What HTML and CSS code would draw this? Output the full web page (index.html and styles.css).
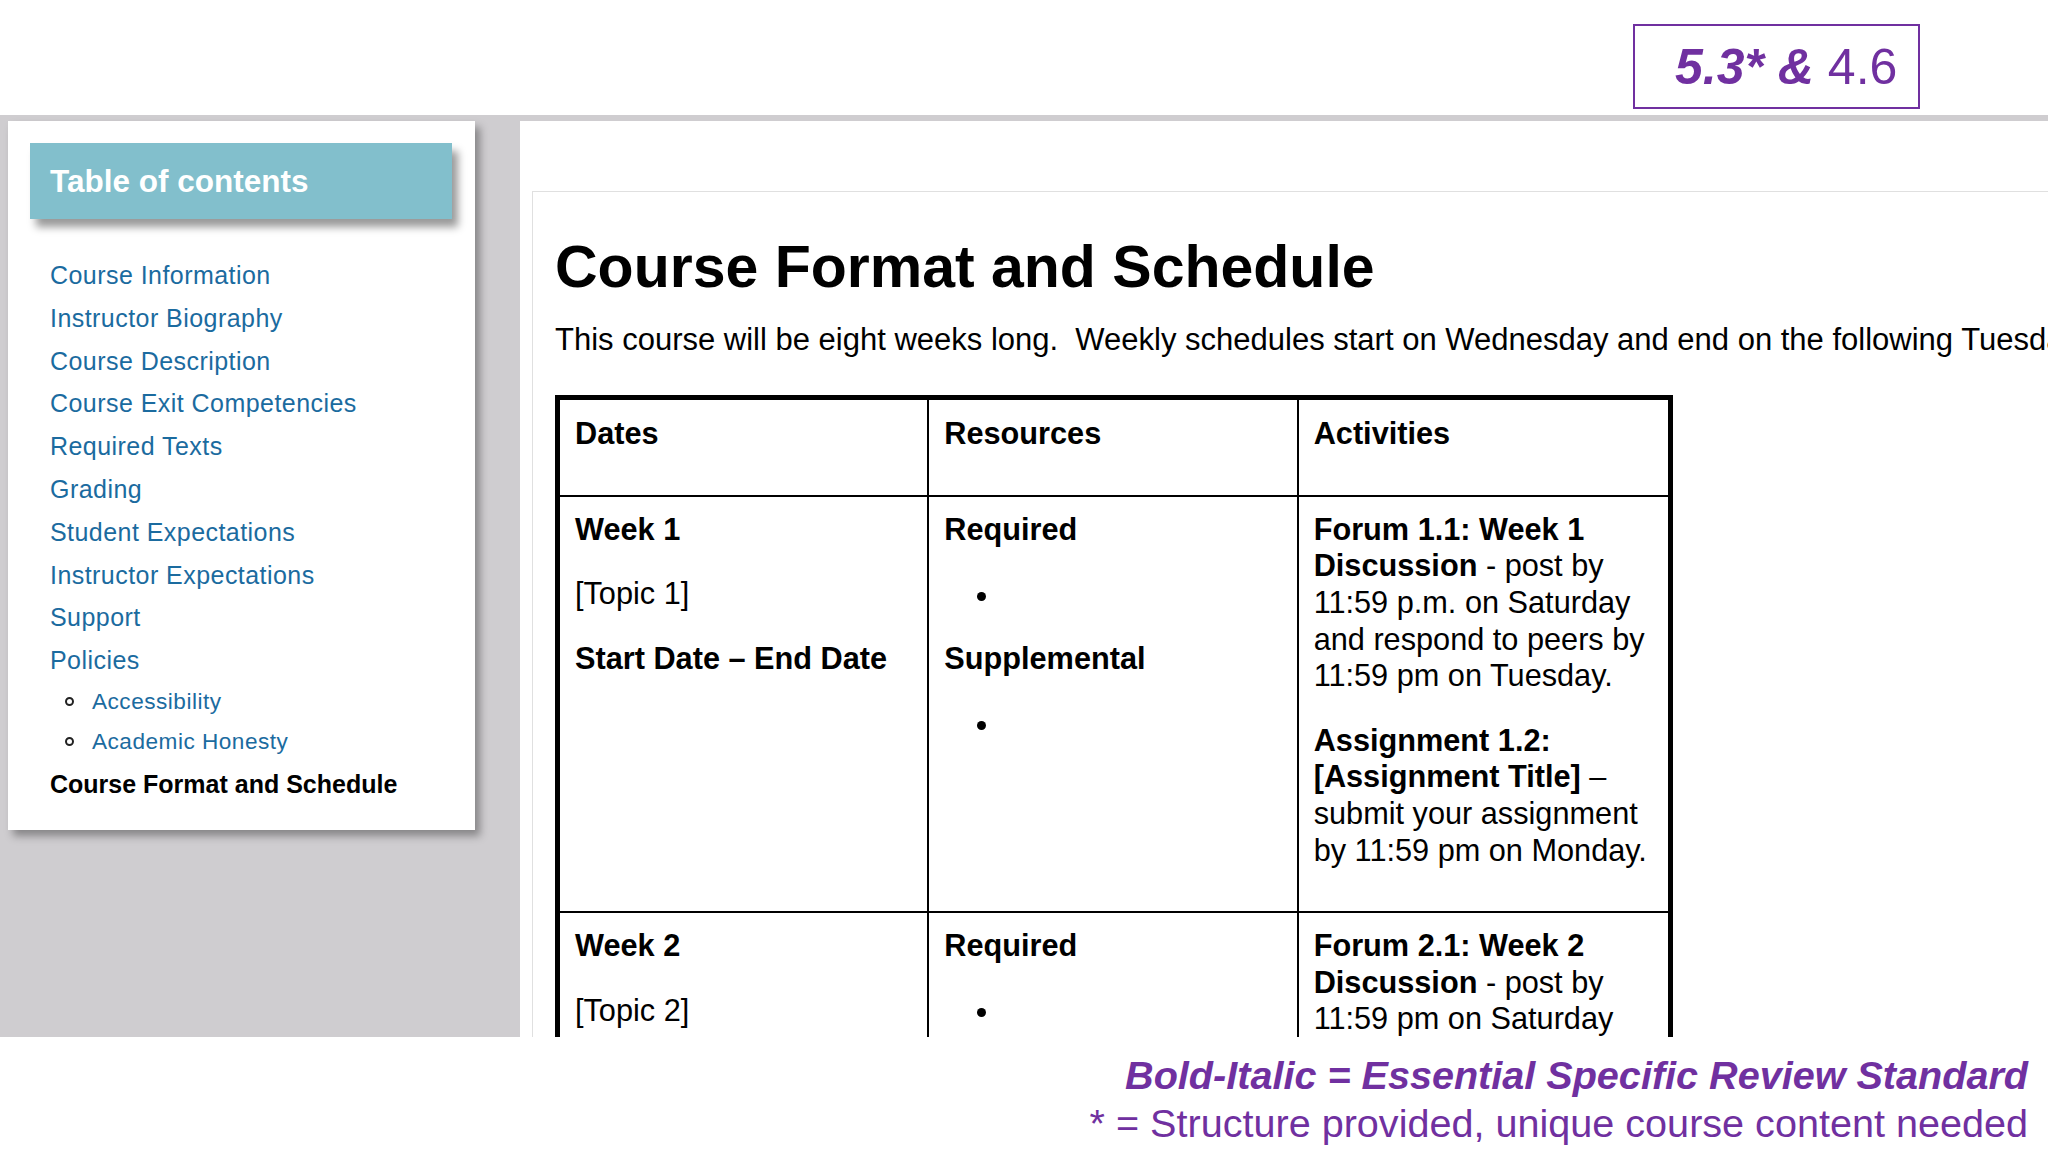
FILE: index.html
```html
<!DOCTYPE html>
<html>
<head>
    <meta charset="utf-8">
    <link rel="stylesheet" href="styles.css">
</head>
<body>
    <div class="top-bar">
        <div class="standard-badge"><b><i>5.3* &amp;</i></b>&nbsp;4.6</div>
    </div>

    <div class="stage">
        <div class="side-column">
            <div class="toc-card">
                <div class="toc-title">Table of contents</div>
                <ul class="toc-list">
                    <li><a href="#">Course Information</a></li>
                    <li><a href="#">Instructor Biography</a></li>
                    <li><a href="#">Course Description</a></li>
                    <li><a href="#">Course Exit Competencies</a></li>
                    <li><a href="#">Required Texts</a></li>
                    <li><a href="#">Grading</a></li>
                    <li><a href="#">Student Expectations</a></li>
                    <li><a href="#">Instructor Expectations</a></li>
                    <li><a href="#">Support</a></li>
                    <li><a href="#">Policies</a>
                        <ul class="toc-sub">
                            <li><a href="#">Accessibility</a></li>
                            <li><a href="#">Academic Honesty</a></li>
                        </ul>
                    </li>
                    <li class="current">Course Format and Schedule</li>
                </ul>
            </div>
        </div>

        <div class="main-column">
            <div class="page-box">
                <h1 class="page-title">Course Format and Schedule</h1>
                <p class="intro">This course will be eight weeks long.&nbsp; Weekly schedules start on Wednesday and end on the following Tuesday.</p>

                <table class="schedule">
                    <tr>
                        <th><p>Dates</p></th>
                        <th><p>Resources</p></th>
                        <th><p>Activities</p></th>
                    </tr>
                    <tr>
                        <td>
                            <p><b>Week 1</b></p>
                            <p>[Topic 1]</p>
                            <p><b>Start Date &ndash; End Date</b></p>
                        </td>
                        <td>
                            <p><b>Required</b></p>
                            <ul class="dots"><li>&nbsp;</li></ul>
                            <p><b>Supplemental</b></p>
                            <ul class="dots"><li>&nbsp;</li></ul>
                        </td>
                        <td>
                            <p><b>Forum 1.1: Week 1 Discussion</b> - post by 11:59 p.m. on Saturday and respond to peers by 11:59 pm on Tuesday.</p>
                            <p><b>Assignment 1.2: [Assignment Title]</b> &ndash; submit your assignment by 11:59 pm on Monday.</p>
                        </td>
                    </tr>
                    <tr class="last-row">
                        <td>
                            <p><b>Week 2</b></p>
                            <p>[Topic 2]</p>
                            <p><b>Start Date &ndash; End Date</b></p>
                        </td>
                        <td>
                            <p><b>Required</b></p>
                            <ul class="dots"><li>&nbsp;</li></ul>
                            <p><b>Supplemental</b></p>
                        </td>
                        <td>
                            <p><b>Forum 2.1: Week 2 Discussion</b> - post by 11:59 pm on Saturday and respond to peers by 11:59 pm on Tuesday.</p>
                        </td>
                    </tr>
                </table>
            </div>
        </div>
    </div>

    <div class="legend">
        <div class="legend-line strong">Bold-Italic = Essential Specific Review Standard</div>
        <div class="legend-line">* = Structure provided, unique course content needed</div>
    </div>
</body>
</html>
```

FILE: styles.css
```css
body {
    margin: 0;
    width: 2048px;
    height: 1152px;
    overflow: hidden;
    background: #fff;
    font-family: 'Liberation Sans', Arial, sans-serif;
    color: #000;
}

.top-bar {
    height: 115px;
    box-sizing: border-box;
    padding: 24px 128px 0 0;
    display: flex;
    justify-content: flex-end;
    align-items: flex-start;
}

.standard-badge {
    width: 287px;
    height: 85px;
    box-sizing: border-box;
    border: 2px solid #7030a0;
    padding-left: 40px;
    display: flex;
    align-items: center;
    font-size: 50px;
    color: #7030a0;
}

.stage {
    height: 922px;
    box-sizing: border-box;
    padding-top: 6px;
    background: #cfcdd0;
    display: flex;
    overflow: hidden;
}

.side-column {
    width: 520px;
    flex-shrink: 0;
    padding-left: 8px;
    box-sizing: border-box;
}

.toc-card {
    width: 467px;
    height: 709px;
    box-sizing: border-box;
    padding: 22px 23px 0 22px;
    background: #fff;
    box-shadow: 5px 6px 8px rgba(0, 0, 0, 0.35);
}

.toc-title {
    height: 76px;
    line-height: 76px;
    padding-left: 20px;
    background: #82bfcc;
    color: #fff;
    font-size: 31.5px;
    font-weight: bold;
    box-shadow: 6px 8px 8px rgba(0, 0, 0, 0.4);
}

.toc-list {
    list-style: none;
    margin: 35px 0 0 0;
    padding: 0 0 0 20px;
    font-size: 25px;
    line-height: 42.8px;
    letter-spacing: 0.45px;
}

.toc-list a {
    color: #1b6b9f;
    text-decoration: none;
}

.toc-sub {
    list-style: none;
    margin: 0;
    padding: 0 0 0 15px;
    font-size: 22.6px;
    line-height: 40.5px;
    letter-spacing: 0.5px;
}

.toc-sub li::before {
    content: '';
    display: inline-block;
    width: 9px;
    height: 9px;
    box-sizing: border-box;
    border: 2px solid #222;
    border-radius: 50%;
    margin-right: 18px;
    vertical-align: middle;
    position: relative;
    top: -2px;
}

.toc-list .current {
    font-weight: bold;
    letter-spacing: 0;
    color: #000;
}

.main-column {
    flex: 1;
    background: #fff;
    padding: 70px 0 0 12px;
    overflow: hidden;
}

.page-box {
    border: 1px solid #e0e0e0;
    border-right: none;
    border-bottom: none;
    padding: 42px 0 0 22px;
    height: 100%;
    white-space: nowrap;
}

.page-title {
    margin: 0 0 21px 0;
    font-size: 59px;
    line-height: 66.7px;
    font-weight: bold;
}

.intro {
    margin: 0;
    font-size: 31px;
    line-height: 36.6px;
}

.schedule {
    margin-top: 37px;
    width: 1118px;
    table-layout: fixed;
    border-collapse: separate;
    border-spacing: 0;
    border: 5px solid #000;
    font-size: 30.7px;
    line-height: 36.6px;
    white-space: normal;
}

.schedule th,
.schedule td {
    vertical-align: top;
    text-align: left;
    padding: 15px 13px 14px 15px;
    border-right: 2px solid #000;
    border-bottom: 2px solid #000;
}

.schedule th {
    padding-top: 16px;
}

.schedule th:last-child,
.schedule td:last-child {
    border-right: none;
}

.schedule .last-row td {
    border-bottom: none;
}

.schedule p {
    margin: 0 0 28px 0;
}

.dots {
    list-style: none;
    margin: 0 0 28px 0;
    padding: 0;
}

.dots li::before {
    content: '';
    display: inline-block;
    width: 9px;
    height: 9px;
    border-radius: 50%;
    background: #000;
    margin-left: 33px;
    vertical-align: middle;
}

.legend {
    padding: 14px 20px 0 0;
    text-align: right;
    color: #7030a0;
    font-size: 39.6px;
    line-height: 48px;
}

.legend-line.strong {
    font-weight: bold;
    font-style: italic;
}
```
